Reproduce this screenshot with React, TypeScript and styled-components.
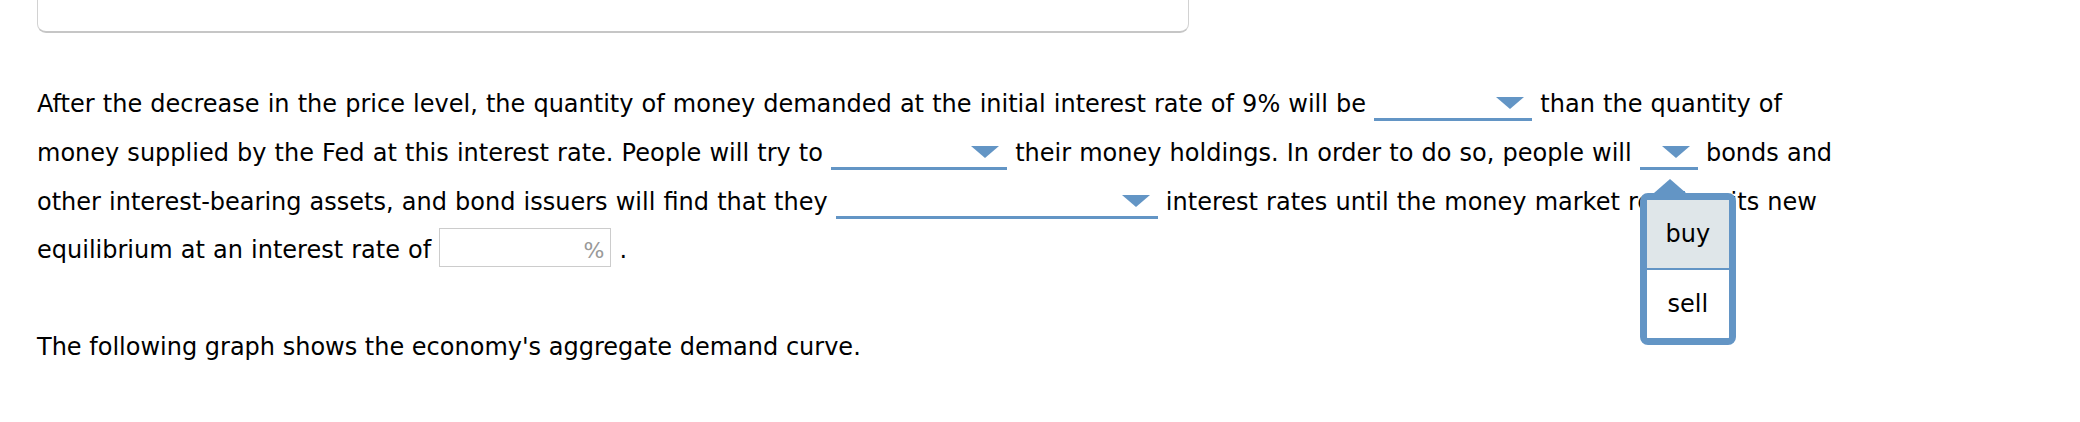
import React from "react";
import styled, { createGlobalStyle } from "styled-components";

const BLUE = "#6395c5";

const Global = createGlobalStyle`
  html, body { margin: 0; padding: 0; background: #fff; }
  body { font-family: "DejaVu Sans", Verdana, sans-serif; color: #000; }
`;

const Page = styled.div`
  width: 2080px;
  box-sizing: border-box;
  padding-left: 37px;
`;

const TopPanel = styled.div`
  width: 1152px;
  height: 33px;
  box-sizing: border-box;
  border: 1px solid #d2d2d2;
  border-top: none;
  border-bottom: 2px solid #c6c6c6;
  border-radius: 0 0 9px 9px;
`;

const Paragraph = styled.p<{ $gap: number; $wordSpacing?: number }>`
  margin: ${(p) => p.$gap}px 0 0;
  font-size: 24px;
  line-height: 48.6px;
  white-space: nowrap;
  word-spacing: ${(p) => p.$wordSpacing ?? 0}px;
`;

const Select = styled.span<{ $w: number }>`
  position: relative;
  display: inline-block;
  width: ${(p) => p.$w}px;
  height: 24px;
  box-sizing: border-box;
  border-bottom: 3px solid ${BLUE};
  vertical-align: -9px;
  word-spacing: 0;
`;

const Arrow = styled.span`
  display: block;
  width: 0;
  height: 0;
  margin: 0 8px 0 auto;
  border-left: 14px solid transparent;
  border-right: 14px solid transparent;
  border-top: 12px solid ${BLUE};
`;

const Popup = styled.div`
  position: absolute;
  left: 0;
  top: calc(100% + 12px);
  z-index: 2;
  width: 96px;
`;

const Caret = styled.div`
  width: 0;
  height: 0;
  margin-left: 14px;
  border-left: 16px solid transparent;
  border-right: 16px solid transparent;
  border-bottom: 14px solid ${BLUE};
`;

const Menu = styled.ul`
  margin: 0;
  padding: 0;
  list-style: none;
  border: 7px solid ${BLUE};
  border-radius: 8px;
  background: #fff;
  overflow: hidden;
`;

const Option = styled.li<{ $active?: boolean }>`
  height: 68px;
  display: flex;
  align-items: center;
  justify-content: center;
  font-size: 24px;
  line-height: normal;
  background: ${(p) => (p.$active ? "#dfe6e9" : "#fff")};
  & + & {
    border-top: 2px solid ${BLUE};
  }
`;

const NumberField = styled.span`
  display: inline-flex;
  justify-content: flex-end;
  align-items: flex-end;
  width: 172px;
  height: 39px;
  box-sizing: border-box;
  border: 1px solid #cccccc;
  padding: 0 6px 3px 0;
  color: #999;
  font-size: 22px;
  line-height: normal;
  vertical-align: baseline;
`;

const Dropdown: React.FC<{ w: number; open?: boolean }> = ({ w, open }) => (
  <Select $w={w}>
    <Arrow />
    {open && (
      <Popup>
        <Caret />
        <Menu>
          <Option $active>buy</Option>
          <Option>sell</Option>
        </Menu>
      </Popup>
    )}
  </Select>
);

export default function App() {
  return (
    <Page>
      <Global />
      <TopPanel />
      <Paragraph $gap={47.4} $wordSpacing={0.5}>
        After the decrease in the price level, the quantity of money demanded at the initial interest rate of 9% will be{" "}
        <Dropdown w={158} /> than the quantity of
        <br />
        money supplied by the Fed at this interest rate. People will try to <Dropdown w={176} /> their money
        holdings. In order to do so, people will <Dropdown w={58} open /> bonds and
        <br />
        other interest-bearing assets, and bond issuers will find that they <Dropdown w={322} /> interest rates
        until the money market reaches its new
        <br />
        equilibrium at an interest rate of <NumberField>%</NumberField> .
      </Paragraph>
      <Paragraph $gap={48.6}>The following graph shows the economy's aggregate demand curve.</Paragraph>
    </Page>
  );
}
